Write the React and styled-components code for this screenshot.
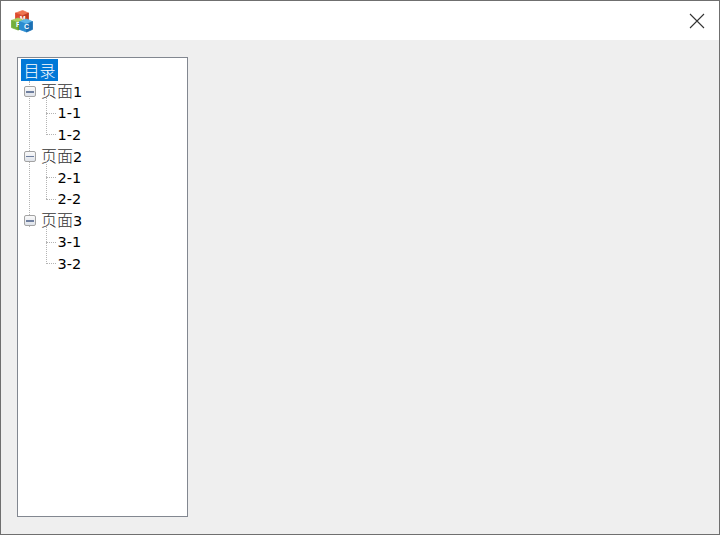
import styled, { createGlobalStyle } from 'styled-components';

const GlobalStyle = createGlobalStyle`
  html, body {
    margin: 0;
    padding: 0;
    background: #efefef;
  }
  * {
    box-sizing: border-box;
  }
`;

const Window = styled.div`
  display: flex;
  flex-direction: column;
  width: 720px;
  height: 535px;
  border: 1px solid #6f6f6f;
  background: #efefef;
  font-family: 'DejaVu Sans', 'Noto Sans CJK SC', sans-serif;
`;

const TitleBar = styled.header`
  display: flex;
  align-items: center;
  justify-content: space-between;
  flex: none;
  height: 39px;
  padding: 1px 14px 0 10px;
  background: #fff;
`;

const Content = styled.main`
  flex: 1;
  display: flex;
  padding: 17px 16px 17px 16px;
`;

const TreePanel = styled.nav`
  width: 171px;
  height: 460px;
  padding: 1px 3px;
  background: #fff;
  border: 1px solid #828790;
  color: #000;
`;

const SelectedLabel = styled.div`
  display: flex;
  align-items: center;
  justify-content: center;
  width: 37px;
  height: 22px;
  background: #0078d7;
  color: #fff;
  font-family: 'Noto Sans CJK SC', sans-serif;
  font-size: 16px;
  font-weight: 300;
`;

const RootList = styled.ul`
  position: relative;
  margin: 0;
  padding: 0;
  list-style: none;

  &::before {
    content: '';
    position: absolute;
    left: 8px;
    top: 0;
    bottom: 48px;
    border-left: 1px dotted #b4b4b4;
  }
`;

const PageRow = styled.div`
  display: flex;
  align-items: center;
  position: relative;
  height: 21.5px;
  padding-left: 3px;
  gap: 5px;
`;

const Expander = styled.span`
  display: flex;
  align-items: center;
  justify-content: center;
  flex: none;
  width: 12px;
  height: 11px;
  border: 1px solid #a3a3a3;
  border-radius: 2px;
  background: linear-gradient(#fafafa, #dfe3ea);

  &::before {
    content: '';
    width: 8px;
    height: 1.5px;
    background: #6f7f9f;
  }
`;

const PageLabel = styled.span`
  display: flex;
  align-items: baseline;
  line-height: 20px;
  margin-bottom: 1px;
`;

const PageName = styled.span`
  font-family: 'Noto Sans CJK SC', sans-serif;
  font-size: 16px;
  font-weight: 300;
  color: #333;
`;

const PageNumber = styled.span`
  font-family: 'DejaVu Sans', sans-serif;
  font-size: 14.5px;
  color: #000;
`;

const ChildList = styled.ul`
  position: relative;
  margin: 0;
  padding: 0 0 0 36.5px;
  list-style: none;

  &::before {
    content: '';
    position: absolute;
    left: 25px;
    top: -6px;
    bottom: 11px;
    border-left: 1px dotted #b4b4b4;
  }
`;

const ChildRow = styled.li`
  position: relative;
  display: flex;
  align-items: center;
  height: 21.5px;
  font-size: 14.5px;

  &::before {
    content: '';
    position: absolute;
    left: -12px;
    top: 10px;
    width: 10px;
    border-top: 1px dotted #b4b4b4;
  }
`;

const CloseButton = styled.button`
  display: flex;
  padding: 0;
  border: 0;
  background: none;
`;

const pages = [
  { name: '页面', number: 1, children: ['1-1', '1-2'] },
  { name: '页面', number: 2, children: ['2-1', '2-2'] },
  { name: '页面', number: 3, children: ['3-1', '3-2'] },
];

// one block of the app icon: a front-facing box with a thin lid and a letter
const Cube = ({ x, y, size, top, left, right, letter }) => {
  const midX = x + size * 0.55;
  const lid = size * 0.2;
  const bottom = y + size;
  return (
    <g strokeLinejoin="round">
      <polygon
        points={`${x},${y + lid} ${midX},${y} ${x + size},${y + lid} ${midX},${y + lid * 2}`}
        fill={top}
        stroke={top}
        strokeWidth="0.8"
      />
      <polygon
        points={`${x},${y + lid} ${midX},${y + lid * 2} ${midX},${bottom} ${x},${bottom - lid}`}
        fill={left}
        stroke={left}
        strokeWidth="0.8"
      />
      <polygon
        points={`${x + size},${y + lid} ${midX},${y + lid * 2} ${midX},${bottom} ${x + size},${bottom - lid}`}
        fill={right}
        stroke={right}
        strokeWidth="0.8"
      />
      <text
        x={midX}
        y={bottom - 3}
        fontSize="7"
        fontWeight="700"
        fill="#fff"
        textAnchor="middle"
        fontFamily="Liberation Sans, sans-serif"
      >
        {letter}
      </text>
    </g>
  );
};

const AppIcon = () => (
  <svg width="22" height="23" viewBox="0 0 22 23">
    <Cube x={4.5} y={0.5} size={13} top="#ef7350" left="#dc4a2e" right="#c23a22" letter="M" />
    <Cube x={0.5} y={8} size={12} top="#a9d060" left="#74b03c" right="#5a962e" letter="F" />
    <Cube x={8.5} y={9} size={13} top="#5ab6ea" left="#2a8cd0" right="#1a70b4" letter="C" />
  </svg>
);

const CloseIcon = () => (
  <svg width="16" height="16" viewBox="0 0 16 16">
    <path d="M1 1 L15 15 M15 1 L1 15" stroke="#333" strokeWidth="1.1" fill="none" />
  </svg>
);

const App = () => (
  <Window>
    <GlobalStyle />
    <TitleBar>
      <AppIcon />
      <CloseButton>
        <CloseIcon />
      </CloseButton>
    </TitleBar>
    <Content>
      <TreePanel>
        <SelectedLabel>目录</SelectedLabel>
        <RootList>
          {pages.map(page => (
            <li key={page.number}>
              <PageRow>
                <Expander />
                <PageLabel>
                  <PageName>{page.name}</PageName>
                  <PageNumber>{page.number}</PageNumber>
                </PageLabel>
              </PageRow>
              <ChildList>
                {page.children.map(child => (
                  <ChildRow key={child}>{child}</ChildRow>
                ))}
              </ChildList>
            </li>
          ))}
        </RootList>
      </TreePanel>
    </Content>
  </Window>
);

export default App;
